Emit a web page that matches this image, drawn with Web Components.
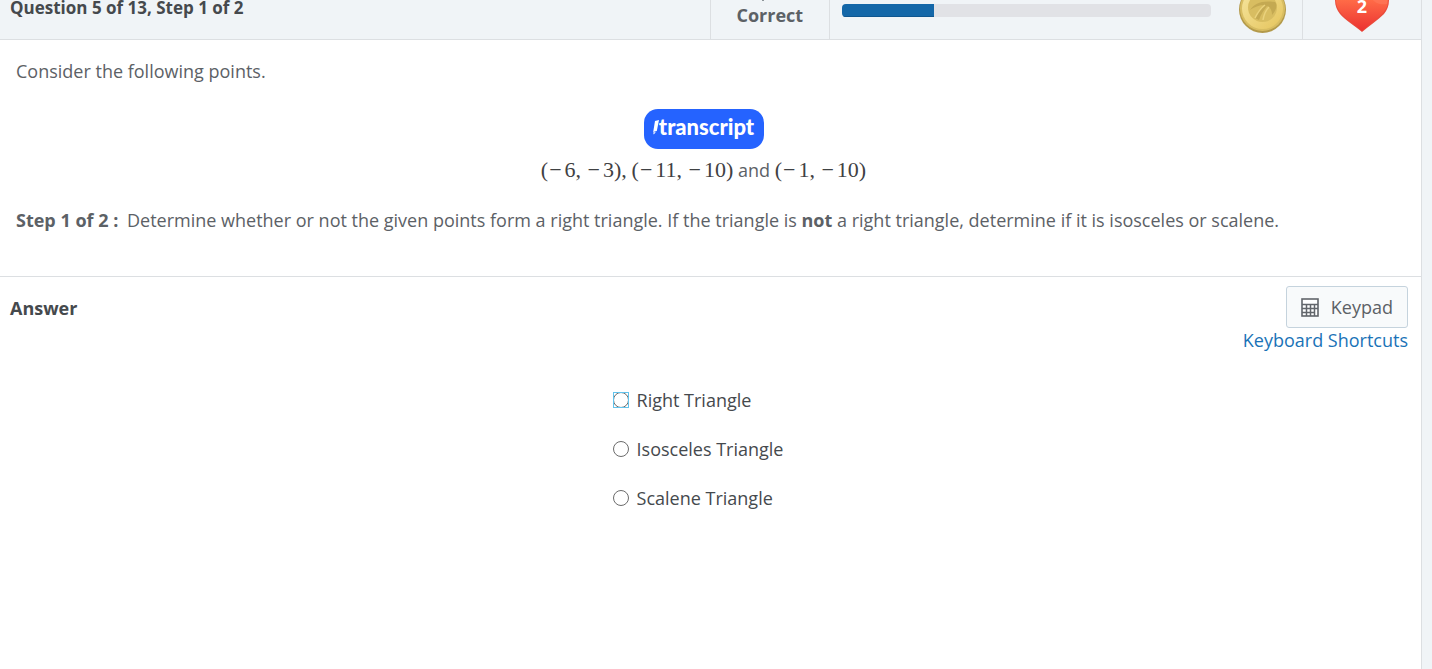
<!DOCTYPE html>
<html lang="en">
<head>
<meta charset="utf-8">
<title>Question 5 of 13</title>
<style>
    body {
        margin: 0;
        background: #f0f4f7;
        color: #5c6166;
        font: 18px/24px "Open Sans", sans-serif;
    }
</style>
</head>
<body>
<lesson-page>
    <status-bar slot="header" heading="Question 5 of 13, Step 1 of 2" progress="25" lives="2"></status-bar>
    <question-body></question-body>
    <answer-panel></answer-panel>
</lesson-page>

<script>
class LessonPage extends HTMLElement {
    constructor() {
        super();
        this.attachShadow({ mode: 'open' });
        this.shadowRoot.innerHTML = `
            <style>
                :host {
                    display: block;
                    min-height: 100vh;
                    box-sizing: border-box;
                    margin-right: 10px;
                    background: #fff;
                    border-right: 1px solid #dcdfe2;
                }
            </style>
            <slot name="header"></slot>
            <main><slot></slot></main>
        `;
    }
}

class StatusBar extends HTMLElement {
    constructor() {
        super();
        this.attachShadow({ mode: 'open' });
        const heading = this.getAttribute('heading');
        const progress = this.getAttribute('progress');
        const lives = this.getAttribute('lives');
        this.shadowRoot.innerHTML = `
            <style>
                :host { display: block; }
                header {
                    display: grid;
                    grid-template-columns: 3fr 119px 2fr 119px;
                    min-height: 39px;
                    background: #f0f4f7;
                    border-bottom: 1px solid #dcdfe2;
                    font-weight: bold;
                }
                h1 {
                    margin: 0;
                    padding-left: 10px;
                    font-size: 17px;
                    line-height: 16px;
                    color: #45494d;
                }
                .cell {
                    box-sizing: border-box;
                    border-left: 1px solid #dcdfe2;
                }
                .correct {
                    padding-top: 3px;
                    text-align: center;
                    background: linear-gradient(#8d9499, #8d9499) 51px 0 / 2px 1px no-repeat;
                }
                .progress {
                    display: flex;
                    justify-content: space-between;
                    padding: 0 16px 0 12px;
                }
                .track {
                    flex: 1;
                    height: 13px;
                    margin: 4px 28px 0 0;
                    border-radius: 4px;
                    overflow: hidden;
                    background: #e1e2e6;
                }
                .fill {
                    height: 100%;
                    box-sizing: border-box;
                    background: #1467a8;
                    border-bottom: 1px solid #0f568f;
                }
                svg { display: block; }
                .lives svg { margin: 0 auto; }
            </style>
            <header>
                <h1>${heading}</h1>
                <div class="cell correct">Correct</div>
                <div class="cell progress">
                    <div class="track" role="progressbar" aria-label="Progress" aria-valuenow="${progress}">
                        <div class="fill" style="width: ${progress}%"></div>
                    </div>
                    <svg width="47" height="34" viewBox="0 14 47 34" aria-hidden="true">
                        <defs>
                            <linearGradient id="gold" x1="0" y1="0" x2="1" y2="1">
                                <stop offset="0" stop-color="#f6e6a0"/>
                                <stop offset="1" stop-color="#e5c45c"/>
                            </linearGradient>
                        </defs>
                        <circle cx="23.5" cy="23.5" r="23.5" fill="#b39a4b"/>
                        <circle cx="23.5" cy="22.5" r="22.5" fill="#d8bd62"/>
                        <circle cx="23.5" cy="22.5" r="20.5" fill="url(#gold)"/>
                        <circle cx="23.5" cy="21.5" r="14.5" fill="#d8bd61"/>
                        <path d="M11 24C15 17 24 14 36 16C39 19 37 25 33 29C33 24 31 21 28 20C25 24 22 28 20 34L16 32C19 26 22 22 26 19C20 19 15 21 11 24Z" fill="#c4a952"/>
                        <path d="M16 32C19 26 22 22 26 19M24 34C25 28 27 24 30 21" fill="none" stroke="#ead27d" stroke-width="1.5"/>
                    </svg>
                </div>
                <div class="cell lives">
                    <svg width="54" height="32" viewBox="0 0 54 32" role="img" aria-label="Lives left">
                        <defs>
                            <linearGradient id="red" x1="0" y1="0" x2="0" y2="1">
                                <stop offset="0" stop-color="#ff6b47"/>
                                <stop offset="1" stop-color="#eb3131"/>
                            </linearGradient>
                        </defs>
                        <path d="M0 0H54C54 6 52 10 49 14C43 20 34 26 27 32C20 26 10 20 5 14C2 10 0 6 0 0Z" fill="#e94b3b"/>
                        <path d="M1 0H53C53 6 51 9 48 13C42 19 34 25 27 31C20 25 11 19 6 13C3 9 1 6 1 0Z" fill="url(#red)"/>
                        <path d="M38 0C41 3 44 5 52 4L52 0Z" fill="#ff7a5b" opacity=".6"/>
                        <text x="27" y="13" text-anchor="middle" font-size="18" fill="#fff">${lives}</text>
                    </svg>
                </div>
            </header>
        `;
    }
}

class TranscriptBadge extends HTMLElement {
    constructor() {
        super();
        this.attachShadow({ mode: 'open' });
        this.shadowRoot.innerHTML = `
            <style>
                :host {
                    display: flex;
                    align-items: center;
                    justify-content: center;
                    box-sizing: border-box;
                    width: 120px;
                    height: 40px;
                    padding-bottom: 4px;
                    border-radius: 14px;
                    background: #2563ff;
                    color: #fff;
                    font: 900 22px/24px Lato, sans-serif;
                }
            </style>
            <svg width="6" height="15" viewBox="0 0 6 15" aria-hidden="true">
                <path d="M2 1L6 0L3.8 11L.2 12ZM.1 12.5L2.8 12L.8 14.5Z" fill="#fff"/>
            </svg>
            <span>transcript</span>
        `;
    }
}

// One coordinate pair, e.g. <math-point x="6" y="3">: both values are negative
class MathPoint extends HTMLElement {
    constructor() {
        super();
        this.attachShadow({ mode: 'open' });
        const x = this.getAttribute('x');
        const y = this.getAttribute('y');
        this.shadowRoot.innerHTML = `
            <style>
                :host {
                    display: inline-block;
                    color: #3f4143;
                    font: 22px/24px "Liberation Serif", serif;
                }
                .sign { margin: 0 3px 0 1px; }
            </style>(<span class="sign">−</span>${x}, <span class="sign">−</span>${y})<slot></slot>`;
    }
}

class QuestionBody extends HTMLElement {
    constructor() {
        super();
        this.attachShadow({ mode: 'open' });
        this.shadowRoot.innerHTML = `
            <style>
                :host {
                    display: block;
                    padding: 19px 30px 44px 16px;
                    border-bottom: 1px solid #dcdfe2;
                }
                p { margin: 0; }
                .points {
                    display: flex;
                    flex-direction: column;
                    align-items: center;
                    gap: 9px;
                    padding: 26px 0;
                }
                .label { margin-right: 4px; }
            </style>
            <p>Consider the following points.</p>
            <div class="points">
                <transcript-badge></transcript-badge>
                <p><math-point x="6" y="3">,</math-point> <math-point x="11" y="10"></math-point> and <math-point x="1" y="10"></math-point></p>
            </div>
            <p><b class="label">Step 1 of 2 :</b> Determine whether or not the given points form a right triangle. If the triangle is <b>not</b> a right triangle, determine if it is isosceles or scalene.</p>
        `;
    }
}

class KeypadButton extends HTMLElement {
    constructor() {
        super();
        this.attachShadow({ mode: 'open' });
        this.shadowRoot.innerHTML = `
            <style>
                :host { display: block; }
                button {
                    display: flex;
                    align-items: center;
                    gap: 12px;
                    height: 42px;
                    padding: 0 14px;
                    border: 1px solid #c5d3dd;
                    border-radius: 3px;
                    background: #f8fafb;
                    color: #5c6166;
                    font: inherit;
                    cursor: pointer;
                }
            </style>
            <button type="button">
                <svg width="18" height="19" viewBox="0 0 18 19" aria-hidden="true">
                    <rect x="1" y="1" width="16" height="17" fill="#fff" stroke="#62666b" stroke-width="1.6"/>
                    <path d="M1 6.5H17M1 10.5H17M1 14.5H13M5.5 6V18M9.5 6V18M13.5 6V18" fill="none" stroke="#62666b" stroke-width="1.5"/>
                </svg>
                <span><slot></slot></span>
            </button>
        `;
    }
}

class AnswerPanel extends HTMLElement {
    constructor() {
        super();
        this.attachShadow({ mode: 'open' });
        const choices = ['Right Triangle', 'Isosceles Triangle', 'Scalene Triangle'];
        this.shadowRoot.innerHTML = `
            <style>
                :host {
                    display: block;
                    padding: 9px 13px 24px 10px;
                }
                .top {
                    display: flex;
                    justify-content: space-between;
                }
                h2 {
                    margin: 10px 0 0;
                    font-size: 18px;
                    line-height: 24px;
                    color: #45494d;
                }
                .tools {
                    display: flex;
                    flex-direction: column;
                    align-items: flex-end;
                }
                a {
                    color: #1a73b7;
                    text-decoration: none;
                }
                form {
                    display: flex;
                    flex-direction: column;
                    gap: 25px;
                    width: fit-content;
                    margin: 36px auto 0;
                    padding-right: 22px;
                }
                label {
                    display: flex;
                    align-items: center;
                    gap: 8px;
                    color: #45494d;
                }
                input {
                    appearance: none;
                    box-sizing: border-box;
                    width: 16px;
                    height: 16px;
                    margin: 0;
                    border: 1px solid #6b6b6b;
                    border-radius: 50%;
                }
                .ring {
                    display: flex;
                    position: relative;
                }
                /* square focus mark over the round control */
                .ring.active::after {
                    content: "";
                    position: absolute;
                    inset: 0;
                    border: 1px solid #62c3ec;
                    pointer-events: none;
                }
            </style>
            <div class="top">
                <h2>Answer</h2>
                <div class="tools">
                    <keypad-button>Keypad</keypad-button>
                    <a href="#shortcuts">Keyboard Shortcuts</a>
                </div>
            </div>
            <form>
                ${choices.map((choice, i) => `
                    <label>
                        <span class="ring ${i === 0 ? 'active' : ''}"><input type="radio" name="triangle" value="${choice}"></span>
                        ${choice}
                    </label>
                `).join('')}
            </form>
        `;
    }
}

customElements.define('transcript-badge', TranscriptBadge);
customElements.define('math-point', MathPoint);
customElements.define('keypad-button', KeypadButton);
customElements.define('lesson-page', LessonPage);
customElements.define('status-bar', StatusBar);
customElements.define('question-body', QuestionBody);
customElements.define('answer-panel', AnswerPanel);
</script>
</body>
</html>
